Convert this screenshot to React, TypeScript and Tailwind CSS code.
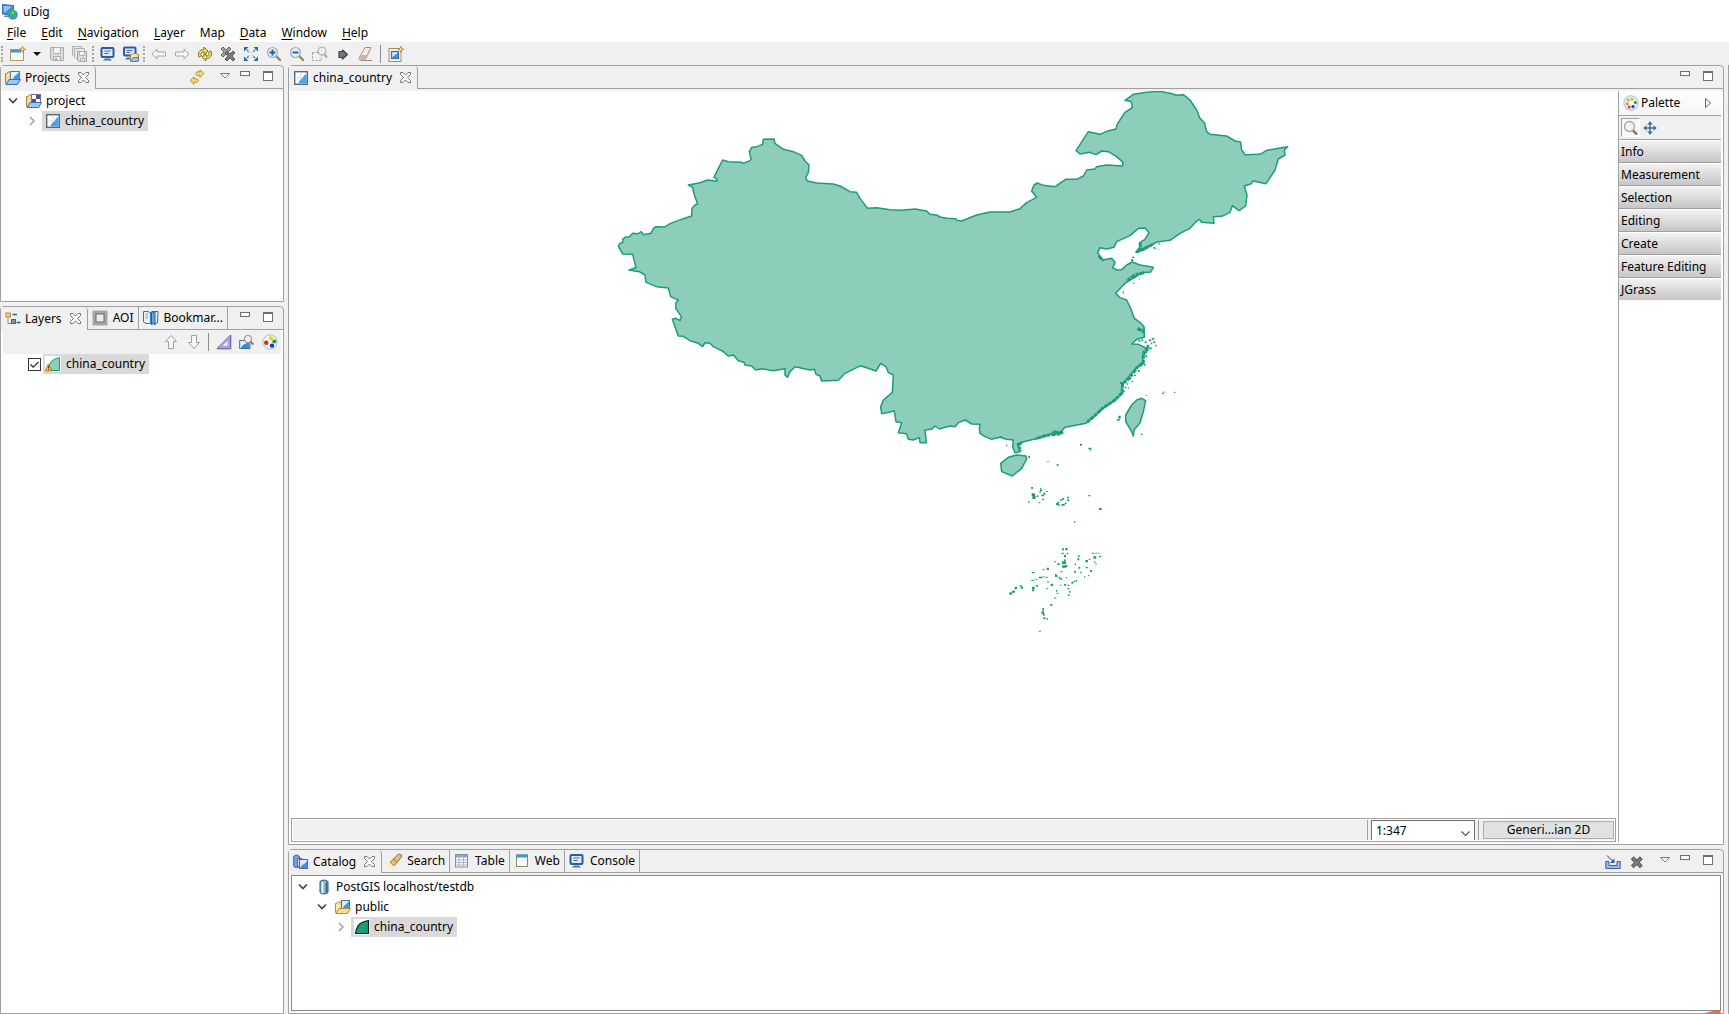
import type { ReactNode } from "react";

/* ---------- icons (16 x 16 grid) ---------- */

function Svg({ children, size = 16 }: { children: ReactNode; size?: number }) {
  return (
    <svg width={size} height={size} viewBox={`0 0 ${size} ${size}`} className="shrink-0" aria-hidden="true">
      {children}
    </svg>
  );
}

const AppIcon = () => (
  <Svg>
    <path d="M0 0.5L11.5 1.5V9L8 11L0.5 10Z" fill="#3d8fd8" stroke="#2a6db5" />
    <path d="M1.5 2L10 2.5L2 9Z" fill="#8cc9f5" />
    <path d="M3 11.5H7L8 13H2Z" fill="#5c87ad" />
    <circle cx="10.7" cy="10.7" r="5" fill="#3b8ad0" />
    <path d="M8 7.5L11 6L14 8L13 10L14.5 12L12 15L10.5 12L7.5 11L6.5 9Z" fill="#3dc04b" />
    <path d="M10 8.5L12 8L11 10ZM8 12.5L9 14L7.5 13.5Z" fill="#b7ecf5" />
  </Svg>
);
const Sparkle = ({ x = 0, y = 0 }: { x?: number; y?: number }) => (
  <path transform={`translate(${x} ${y})`} d="M3 0L3.8 2.2L6 3L3.8 3.8L3 6L2.2 3.8L0 3L2.2 2.2Z" fill="#ffe99a" stroke="#b8862a" strokeWidth=".9" />
);
const NewIcon = () => (
  <Svg>
    <rect x="0.5" y="3.5" width="13" height="11" fill="#eef6fc" stroke="#b39a62" />
    <path d="M1 4H11V6.5H1Z" fill="#4e93cf" />
    <path d="M3 14L13 7V14Z" fill="#fff" />
    <Sparkle x={9.5} y={0.3} />
  </Svg>
);
const SaveIcon = () => (
  <Svg>
    <path d="M1.5 1.5H14.5V14.5H3L1.5 13Z" fill="#dcdcdc" stroke="#aaa" />
    <path d="M4.500 1.500H11.500V7.500H4.500Z" fill="#f4f4f4" stroke="#b0b0b0" />
    <path d="M4.500 10.500H11.500V14.500H4.500Z" fill="#eee" stroke="#aaa" />
    <path d="M6 12H8V14H6Z" fill="#aaa" />
  </Svg>
);
const SaveAllIcon = () => (
  <Svg>
    <path d="M0.500 0.500H9.500V10.500H2L0.500 9Z" fill="#e8e8e8" stroke="#b0b0b0" />
    <path d="M2.500 2.500H12.500V12.500H4L2.500 11Z" fill="#e8e8e8" stroke="#b0b0b0" />
    <path d="M5.500 5.500H14.500V15.500H7L5.500 14Z" fill="#dcdcdc" stroke="#a4a4a4" />
    <path d="M7.500 5.500H12.500V9.500H7.500ZM8.500 12.500H12.500V15H8.500Z" fill="#f4f4f4" stroke="#b0b0b0" />
  </Svg>
);
const MonitorIcon = () => (
  <Svg>
    <rect x="1.500" y="2" width="12" height="9" rx="1" fill="#dfeaf8" stroke="#2f5b96" strokeWidth="2" />
    <path d="M4.500 5H10.500M4.500 7.500H8.500" stroke="#42699e" />
    <path d="M5 12.500H10L12 14.500H3Z" fill="#4a73ab" />
  </Svg>
);
const MonitorFolderIcon = () => (
  <Svg>
    <rect x="1" y="1.500" width="11.500" height="8" rx="1" fill="#dfeaf8" stroke="#2f5b96" strokeWidth="2" />
    <path d="M3.500 4.500H9.500M3.500 6.500H7" stroke="#42699e" />
    <path d="M4 11.500H8L8 13.500H2Z" fill="#4a73ab" />
    <path d="M7.500 15V9L9 8.500L10 7.500H13L14 8.500H15.500V15Z" fill="#fbe3a2" stroke="#b88a38" />
    <path d="M7.500 15.500L10 11.500H16L14.500 15.500Z" fill="#9cc4f0" stroke="#3a6cb8" strokeWidth=".8" />
  </Svg>
);
const ArrowL = () => (
  <Svg><path d="M1 8L6 3V6H14.500V10H6V13Z" fill="#f7f7f7" stroke="#a8a8a8" /></Svg>
);
const ArrowR = () => (
  <Svg><path d="M15 8L10 3V6H1.500V10H10V13Z" fill="#f7f7f7" stroke="#a8a8a8" /></Svg>
);
const ArrowU = () => (
  <Svg><path d="M8 1.500L13.500 7.500H10.500V14.500H5.500V7.500H2.500Z" fill="#f7f7f7" stroke="#a0a0a0" /></Svg>
);
const ArrowD = () => (
  <Svg><path d="M8 14.500L13.500 8.500H10.500V1.500H5.500V8.500H2.500Z" fill="#f7f7f7" stroke="#a0a0a0" /></Svg>
);
const RefreshIcon = () => (
  <Svg>
    <path d="M2 11C0 7 3 3 7 3.500V1L11 5L7 8.500V6C4 5.500 3.500 8 4.500 10Z" fill="#f6e04a" stroke="#6f6528" strokeWidth=".9" />
    <path d="M14 5C16 9 13 13 9 12.500V15L5 11L9 7.500V10C12 10.500 12.500 8 11.500 6Z" fill="#f6e04a" stroke="#6f6528" strokeWidth=".9" />
  </Svg>
);
const CROSS = "M1 3L3 1L6 4L9 1L11 3L8 6L11 9L9 11L6 8L3 11L1 9L4 6Z";
const StopIcon = () => (
  <Svg>
    <path d={CROSS} fill="#a2a2a2" stroke="#666" />
    <path d={CROSS} transform="translate(4 4)" fill="#7d7d7d" stroke="#5a5a5a" />
  </Svg>
);
const ExtentIcon = () => (
  <Svg>
    <path d="M2 2L6.500 6.500M14 2L9.500 6.500M2 14L6.500 9.500M14 14L9.500 9.500" stroke="#2c6a9c" strokeDasharray="2 1" strokeWidth="1.400" />
    <path d="M1 1H5.500L1 5.500ZM15 1H10.500L15 5.500ZM1 15H5.500L1 10.500ZM15 15H10.500L15 10.500Z" fill="#2a6b9f" />
  </Svg>
);
const Lens = ({ plus }: { plus: boolean }) => (
  <Svg>
    <path d="M9.500 9.500L14 14" stroke="#a6815a" strokeWidth="2.400" strokeLinecap="round" />
    <circle cx="6.500" cy="6.500" r="5" fill="#e6f1fb" stroke="#a3adba" strokeWidth="1.200" />
    <path d={plus ? "M3.500 6.500H9.500M6.500 3.500V9.500" : "M3.500 6.500H9.500"} stroke="#2b5f9e" strokeWidth="2" />
  </Svg>
);
const ZoomBoxIcon = () => (
  <Svg>
    <rect x="0.500" y="6.500" width="9" height="8" fill="none" stroke="#9a9a9a" strokeDasharray="2 1.500" />
    <circle cx="10" cy="5" r="4" fill="#ededed" stroke="#b0b0b0" />
    <path d="M12 8L15 11.500" stroke="#b0a8a0" strokeWidth="2" />
  </Svg>
);
const GoIcon = () => (
  <Svg><path d="M4 5.500H7.500V4L12.500 8.500L7.500 13V11.500H4Z" fill="#6e7480" stroke="#3f444d" strokeWidth="1.200" strokeLinejoin="round" /></Svg>
);
const EraserIcon = () => (
  <Svg>
    <path d="M3 14.500H14" stroke="#9a8a7a" />
    <path d="M1 12L7 1.500H13L8 12L6.500 14H1.500Z" fill="#f6e9dd" stroke="#a8917c" />
    <path d="M1 12H8L13 1.500" stroke="#bfa48c" fill="none" strokeWidth=".8" />
    <path d="M1 12L3 9H9.500L8 12L6.500 14H1.500Z" fill="#cdb8a8" />
  </Svg>
);
const MapGlyph = () => (
  <Svg>
    <rect x="1.700" y="1.700" width="12.600" height="12.600" fill="#fff" stroke="#5e6670" strokeWidth="1.400" />
    <path d="M8 2.500V14M2.500 8H13.500" stroke="#d3dde6" />
    <path d="M5.500 13.600C6 9.500 9 9.500 10 7.500C11 5 12 4.500 13.600 4V13.600Z" fill="#4aa3ee" />
  </Svg>
);
const NewMapIcon = () => (
  <Svg>
    <rect x="1" y="2.500" width="12" height="13" fill="#fff" stroke="#a08a58" />
    <rect x="3.500" y="5.500" width="7" height="7" fill="#d5e9fa" stroke="#3f6ea6" strokeWidth="1.300" />
    <path d="M4 12C6 8 8 10 10 6V12Z" fill="#3f8fdd" />
    <Sparkle x={9.800} y={0.300} />
  </Svg>
);
const ProjectFolder = ({ dark = false }: { dark?: boolean }) => (
  <Svg>
    <path d="M0.500 13.500V3.500H2L3 2H5.500V5H13V13.500Z" fill="#f6dc94" stroke="#a9843c" />
    <rect x="5.500" y="1.500" width="9" height="8" fill={dark ? "#fff" : "#e8f4fd"} stroke="#7c6a9c" />
    <path d={dark ? "M10 2H14V6H10ZM6 6H10V9H6Z" : "M8 9C9 5 11 6 14 2V9Z"} fill={dark ? "#5a4a8c" : "#3f9be8"} />
    <path d="M1 14.500L4 9.500H15.500L12.500 14.500Z" fill="#9cc6f2" stroke="#3d6fb5" />
  </Svg>
);
const SchemaFolder = () => (
  <Svg>
    <path d="M0.500 13.500V4.500H2L3 3H6V6H13V13.500Z" fill="#fbe7b4" stroke="#c08a34" />
    <rect x="6.500" y="1.500" width="8" height="8" fill="#d9ecfb" stroke="#51789f" />
    <path d="M8 9C9 6 11 6 14 2V9Z" fill="#3f9be8" />
    <path d="M1 14.500L4 9.500H15.500L12.500 14.500Z" fill="#fbdc94" stroke="#c08a34" />
  </Svg>
);
const LinkIcon = () => (
  <Svg>
    <path d="M15 4.500L11 0.800V2.800H8L6.500 5L8 6.500H11V8.500Z" fill="#f9d873" stroke="#b5862b" strokeWidth=".9" />
    <path d="M1 11.500L5 7.800V9.800H8L9.500 11.500L8 13.300H5V15.300Z" fill="#f9d873" stroke="#b5862b" strokeWidth=".9" />
  </Svg>
);
const LayersIcon = () => (
  <Svg>
    <path d="M3 5V12.500H6" stroke="#8a8a8a" fill="none" />
    <rect x="1" y="2" width="4.500" height="4" fill="#f7cf87" stroke="#c48a33" />
    <path d="M7.500 3.500H12M11.500 11.500H15.500" stroke="#2f5f9c" strokeWidth="1.600" />
    <rect x="6.500" y="8.500" width="4" height="4" fill="#8c8ca8" stroke="#5a5a78" />
  </Svg>
);
const AoiIcon = () => (
  <Svg>
    <rect x="0.500" y="0.500" width="15" height="15" fill="#a5a5a5" />
    <rect x="4" y="4" width="8" height="8" fill="#ececec" stroke="#6a6a6a" />
  </Svg>
);
const BookIcon = () => (
  <Svg>
    <path d="M0.500 1.500H5L7.500 3V13.500H3L0.500 12Z" fill="#e9f3fc" stroke="#3b6ea8" />
    <path d="M2.500 4H5M2.500 6H5M2.500 8H5" stroke="#8aa6c4" />
    <path d="M7.500 3L9 1.500H15L14.500 13H8Z" fill="#e9f3fc" stroke="#3b6ea8" />
    <path d="M8.500 2H12V15L10.300 13L8.500 15Z" fill="#56a9ea" stroke="#245f9c" />
  </Svg>
);
const SetSquareIcon = () => (
  <Svg>
    <path d="M1 14.500L14.500 1V14.500Z" fill="#a9a4dc" stroke="#7670b0" />
    <path d="M6.500 11.800L11.500 7V11.800Z" fill="#f4f4fb" />
    <path d="M15.500 1V15.500H1" stroke="#c4c2da" fill="none" />
  </Svg>
);
const LayerZoomIcon = () => (
  <Svg>
    <path d="M0.700 14.500V6.500H8L11 9V14.500Z" fill="#e8f3fd" stroke="#3c6a9c" />
    <path d="M2 14C4 9 6 11 9 8L10.500 9V14Z" fill="#2e8ae2" />
    <circle cx="9" cy="5" r="3.500" fill="#f3f3f3" stroke="#a09a8e" strokeWidth="1.200" />
    <path d="M11.500 7.500L14.500 10.500" stroke="#93805f" strokeWidth="2" />
  </Svg>
);
const PaletteIcon = ({ soft = false }: { soft?: boolean }) => (
  <Svg>
    <circle cx="8" cy="8" r="7.200" fill={soft ? "#e3eef8" : "#eaf6fc"} stroke="#9cc0dd" />
    <circle cx="5" cy="4.800" r={soft ? 1.500 : 2} fill={soft ? "#f3a81c" : "#fff"} />
    <circle cx="9" cy="4.200" r={soft ? 1.500 : 2.200} fill={soft ? "#f0b21c" : "#e9dc10"} />
    <circle cx="12.300" cy="7.600" r={soft ? 1.500 : 2} fill="#24a02c" />
    <circle cx="10" cy="11.600" r={soft ? 1.500 : 2.200} fill="#1632d0" />
    <circle cx="4.200" cy="8.800" r={soft ? 1.500 : 2.200} fill={soft ? "#f0901c" : "#e02412"} />
    {soft && <circle cx="6.200" cy="12" r="1.500" fill="#d2405a" />}
    {soft && <circle cx="8" cy="8" r="1.800" fill="#fff" />}
  </Svg>
);
const LayerShape = () => (
  <Svg>
    <rect width="16" height="16" fill="#fff" />
    <path d="M3 15C3.500 6 8 3 14.500 1.500V14.500H4" fill="#8dceba" stroke="#1b9e77" />
    <path d="M3.500 8L7 15H0Z" fill="#f5c25c" stroke="#b07818" />
    <path d="M3.500 10V12.500M3.500 13.200V14.200" stroke="#5a3a08" />
  </Svg>
);
const FeatureShape = () => (
  <Svg>
    <rect width="16" height="16" fill="#fff" />
    <path d="M1.500 14.500C3 5 7 3 14.500 1.500V14.500Z" fill="#1b9e77" stroke="#06241b" strokeWidth="1.200" />
  </Svg>
);
const CatalogIcon = () => (
  <Svg>
    <path d="M0.700 3C0.700 0.500 6.500 0.500 6.500 3V12C6.500 14 0.700 14 0.700 12Z" fill="#6aa6dd" stroke="#2d5f9e" />
    <path d="M4.500 4.500H9V12.500H4.500Z" fill="#e0dcf2" stroke="#6a5aa6" />
    <rect x="6.500" y="5.500" width="8" height="9" fill="#d9ecfb" stroke="#6a5aa6" />
    <path d="M7.500 14C9 9 12 11 14 7V14Z" fill="#3f8fe0" />
  </Svg>
);
const SearchIcon = () => (
  <Svg>
    <path d="M0.500 11L5 9L7 12L2 15.500Z" fill="#fdf0b8" />
    <path d="M4 9L8 13L11 9.500L7.500 6Z" fill="#f0c05c" stroke="#b58428" />
    <path d="M7.500 6L12.500 1L15.500 2V4L11 9.500Z" fill="#e5bd85" stroke="#8d6c55" />
  </Svg>
);
const TableIcon = () => (
  <Svg>
    <rect x="1.500" y="1.500" width="12" height="12.500" fill="#fff" stroke="#7e8fa8" />
    <path d="M2 2H13V4.500H2Z" fill="#88a5c8" />
    <path d="M2 7H13M2 9.500H13M2 12H13M5 2V14M9.500 2V14" stroke="#a8b5c8" />
  </Svg>
);
const WebIcon = () => (
  <Svg>
    <rect x="2.500" y="2" width="11" height="11.500" fill="#f4fafe" stroke="#8f8a62" />
    <path d="M2 1.500H14V4.500H2Z" fill="#4a93ce" />
  </Svg>
);
const DbIcon = () => (
  <Svg>
    <path d="M4 3C4 0.500 12 0.500 12 3V13C12 15.500 4 15.500 4 13Z" fill="#7eb3cf" stroke="#24506c" />
    <path d="M6.500 3V14" stroke="#e4f4fb" strokeWidth="2" />
    <path d="M10.500 3.500V13.500" stroke="#2d6382" strokeWidth="1.400" />
  </Svg>
);
const ImportIcon = () => (
  <Svg>
    <path d="M0.800 7.500H4V11.500H12V7.500H15.200V14.500H0.800Z" fill="#9cbbe4" stroke="#3a5f9e" />
    <path d="M2 1.500L8 7.500" stroke="#2a3a9c" />
    <path d="M9.500 4.500V9H5Z" fill="#1f5fa8" />
  </Svg>
);
const DeleteIcon = () => (
  <Svg>
    <path d={CROSS} transform="translate(1.500 2) scale(1.050)" fill="#7d7d7d" stroke="#5b5b5b" />
  </Svg>
);
const ToolLens = () => (
  <Svg>
    <path d="M9.500 10L14 14.500" stroke="#8a6a5a" strokeWidth="2.400" />
    <circle cx="6.500" cy="6.500" r="5" fill="#f2f2f2" stroke="#a8a8a8" strokeWidth="1.300" />
  </Svg>
);
const PanIcon = () => (
  <Svg>
    <path d="M8 3V13M3 8H13" stroke="#3a6ea5" strokeWidth="1.500" />
    <path d="M8 1.200L10.800 4.500H5.200ZM8 14.800L10.800 11.500H5.200ZM1.200 8L4.500 5.200V10.800ZM14.800 8L11.500 5.200V10.800Z" fill="#3a6ea5" />
  </Svg>
);
const CloseIcon = () => (
  <Svg size={11}>
    <path d="M0.500 0.500H3L5.500 3L8 0.500H10.500V2.500L7.500 5.500L10.500 8.500V10.500H8L5.500 8L3 10.500H0.500V8.500L3.500 5.500L0.500 2.500Z" fill="#fafafa" stroke="#6a6a6a" strokeWidth=".9" />
  </Svg>
);

/* ---------- small building blocks ---------- */

function IconButton({ label, className = "w-[23px]", children }: { label: string; className?: string; children: ReactNode }) {
  return (
    <button type="button" aria-label={label} className={`flex h-6 items-center justify-center ${className}`}>
      {children}
    </button>
  );
}

const Grip = () => <span className="mr-0.5 ml-px h-4 w-0 border-l-2 border-dotted border-[#b0a890]" />;

const ViewMenu = () => (
  <button type="button" aria-label="View menu" className="h-2.5 w-2.5">
    <svg width="10" height="6" viewBox="0 0 10 6"><path d="M0.500 0.500H9.500L5 5Z" fill="#fff" stroke="#777" /></svg>
  </button>
);

function WindowButtons({ menu = false }: { menu?: boolean }) {
  return (
    <div className="flex items-start pt-[5px] pr-[10px]">
      {menu && <ViewMenu />}
      <button type="button" aria-label="Minimize" className="ml-2.5 h-[5px] w-2.5 border border-[#6e6e6e] bg-white" />
      <button type="button" aria-label="Maximize" className="ml-[13px] h-2.5 w-2.5 border border-t-2 border-[#6e6e6e] bg-white" />
    </div>
  );
}

function Tab({ icon, label, active = false }: { icon: ReactNode; label: string; active?: boolean }) {
  return (
    <div
      role="tab"
      aria-selected={active}
      className={`flex items-center border-r border-[#a0a0a0] pl-1 ${active ? "-mb-px h-[23px] gap-1 rounded-tr bg-[#f0f0f0] pr-1.5" : "h-[22px] gap-[5px] pr-1"}`}
    >
      {icon}
      <button type="button" className="whitespace-nowrap">{label}</button>
      {active && (
        <button type="button" aria-label={`Close ${label}`} className="ml-1">
          <CloseIcon />
        </button>
      )}
    </div>
  );
}

function Panel({ tabs, tools, children, className = "" }: { tabs: ReactNode; tools: ReactNode; children: ReactNode; className?: string }) {
  return (
    <section className={`flex min-h-0 flex-col rounded-t-[4px] border border-[#a0a0a0] bg-[#f0f0f0] ${className}`}>
      <header className="flex h-[23px] shrink-0 justify-between border-b border-[#a0a0a0]">
        <div className="flex" role="tablist">{tabs}</div>
        <div className="flex items-start">{tools}</div>
      </header>
      {children}
    </section>
  );
}

const Chevron = ({ open = false }: { open?: boolean }) => (
  <svg width="10" height="10" viewBox="0 0 10 10" className="shrink-0" aria-hidden="true">
    {open ? (
      <path d="M1 2.500L5 6.500L9 2.500" fill="none" stroke="#404040" strokeWidth="1.600" />
    ) : (
      <path d="M3 1L7 5L3 9" fill="none" stroke="#a6a6a6" strokeWidth="1.600" />
    )}
  </svg>
);

function TreeRow({ icon, label, open = false, selected = false, className = "" }: { icon: ReactNode; label: string; open?: boolean; selected?: boolean; className?: string }) {
  return (
    <li className={`flex h-5 items-center ${className}`}>
      <button type="button" aria-label={open ? "Collapse" : "Expand"}><Chevron open={open} /></button>
      <span className={`ml-[5px] flex h-5 items-center gap-1 pr-1 pl-[3px] ${selected ? "bg-[#d9d9d9]" : ""}`}>
        {icon}
        {label}
      </span>
    </li>
  );
}

/* ---------- map ---------- */

type Section = { dx: number; dy: number; pts: string };

/* Border of the country, clockwise from its western tip; each section has its own origin. */
const border: Section[] = [
  { dx: 1800, dy: 240, pts: "55,497 60,490 68,488 68,478 75,472 88,470 98,460 115,461 124,455 130,464 153,460 160,446 168,440 195,441 210,431 250,416 275,408 276,385 285,375 293,372 283,345 278,322 265,315 300,308 323,300 350,304 352,298 342,292 355,265 368,240 385,245 425,247 430,250 448,243 453,238 448,215 455,202 470,200 488,193 490,178 522,177 525,190 550,208 580,215 605,226 615,243 627,255 625,278 617,292 622,303 650,309 700,312 720,318 750,335 770,337 780,355 803,385 830,383 870,389 905,391 945,387 980,393 990,403 1010,405" },
  { dx: 2820, dy: 240, pts: "0,411 20,415 48,416 50,421 65,423 110,405 150,396 210,396 240,386 260,368 290,352 275,333 282,315 292,309 310,316 345,320 377,298 410,298 430,288 440,270 465,267 470,260 500,255 548,258 549,247 530,230 505,215 485,213 468,224 450,217 420,222 408,212 445,155 480,163 505,152 528,147 532,132 555,97 577,83 574,65 555,61 580,43 620,37 660,34 690,40 710,46 730,44 750,60 770,90 780,115 793,128 800,155 810,163 860,168 885,183 902,186 905,210 915,224 960,223 980,211 1043,200 1033,210 1035,225 1015,237 1005,270 978,311 940,303 932,312 913,318 921,345 917,378 897,392 877,377 870,397 845,409 820,410 822,430 785,427 778,418 768,425 750,445 720,460 690,481 650,486 610,510 590,516 600,500 600,487 615,478 627,458 615,444 595,445 570,467 530,485 522,502 500,507 480,503 473,518 488,540 515,535 525,547 518,563 530,570 545,569 560,555 577,546 600,555 640,562 632,576 605,578 585,592" },
  { dx: 2940, dy: 750, pts: "455,87 435,100 407,130 420,143 440,150 452,175 463,205 480,217 492,230 493,262 470,268 455,282 475,283 495,292 500,305 487,320 490,340 470,352 455,370 425,405 428,430 405,450 370,475 350,492 318,520 255,532 240,548 225,545 205,555 165,567 125,577 112,582 120,605 105,608 98,590 100,570 80,568 60,562 35,568 15,560" },
  { dx: 2700, dy: 1200, pts: "240,100 238,85 240,73 215,72 195,60 175,68 165,80 150,78 130,83 118,87 105,78 95,88 75,90 79,128 60,128 58,113 40,120 25,118" },
  { dx: 1800, dy: 240, pts: "920,1061 895,1058 905,1028 888,1025 883,993 845,1001 842,980 850,960 877,937 880,885 865,878 858,860 842,850 828,873 782,857 735,880 715,901 665,903 660,888 648,883 643,868 630,870 585,860 570,875 562,892 555,885 555,866 520,872 485,866 467,870 455,858 435,855 432,847 415,842 400,825 385,828 370,815 340,800 330,790 315,788 308,800 295,790 270,782 250,769 235,768 225,740 217,718 228,715 240,722 244,710 227,685 228,668 235,660 212,650 205,624 170,620 138,607 135,585 118,575 87,570 108,563 98,523 68,522 60,508" },
];
const taiwan: Section[] = [{ dx: 2940, dy: 750, pts: "485,445 497,452 490,485 480,518 462,540 460,558 455,545 437,515 437,495 455,465 470,450" }];
const hainan: Section[] = [{ dx: 2940, dy: 750, pts: "85,622 110,615 138,618 140,627 125,655 97,678 65,665 62,640" }];

/* Stretches of coast so dense with islets that they read as a heavier line. */
const rugged: Section[] = [
  { dx: 2940, dy: 750, pts: "472,235 490,245 490,236" },
  { dx: 2940, dy: 750, pts: "505,290 490,308 490,338 472,352 450,382 428,402 426,428 405,450 368,474 350,492 322,516" },
  { dx: 2940, dy: 750, pts: "250,548 222,546 238,552 200,556 168,566" },
  { dx: 2940, dy: 750, pts: "492,68 466,74 440,92" },
  { dx: 2820, dy: 240, pts: "600,487 602,505 592,515 612,506 640,492" },
  { dx: 2820, dy: 240, pts: "476,528 490,542" },
  { dx: 2940, dy: 750, pts: "125,577 116,585 121,604" },
];

const place = (sections: Section[]) =>
  sections
    .flatMap((s) => s.pts.split(" ").map((p) => {
      const [x, y] = p.split(",").map(Number);
      return `${x + s.dx},${y + s.dy}`;
    }))
    .join(" ");

/* Islets as "x,y,width,height". */
const islets: Section[] = [
  { dx: 2820, dy: 240, pts: "573,538,5,6 578,530,5,4 640,500,5,6 655,488,4,6 645,505,4,3 655,506,3,3 586,512,8,6 597,596,3,3" },
  { dx: 2940, dy: 750, pts: "457,20,5,5 455,28,5,5 460,98,4,4 428,124,4,6 475,270,6,5 484,268,5,5 494,274,6,6 507,268,6,6 515,264,8,5 520,274,6,5 512,278,5,5 525,284,5,5 500,284,8,6 508,292,7,6 498,298,8,6 496,316,6,6 492,342,5,5 474,360,5,6 462,374,6,4 448,384,5,5 455,392,5,4 440,400,5,4 434,410,6,5 443,412,4,4 430,422,5,4 420,396,6,6 546,428,6,4 551,424,3,4 582,425,4,4 497,435,4,3 415,497,7,9 410,508,10,4 483,551,5,4 300,581,6,6 325,593,9,5 329,598,5,4 145,617,5,7 202,633,4,3 230,642,6,5 153,711,6,4 180,714,3,4 78,584,4,4 60,558,5,5" },
  { dx: 2940, dy: 1410, pts: "153,51,6,5 144,94,5,4 155,70,10,8 157,78,10,9 170,76,5,5 180,58,6,5 178,64,5,4 190,68,6,6 184,74,8,5 186,86,6,5 198,62,5,4 177,96,4,4 228,99,8,6 232,95,5,4 234,103,5,5 240,88,6,4 246,84,6,5 244,102,10,5 254,98,6,5 261,80,6,5 262,88,6,5 325,75,6,4 357,114,8,6 282,153,4,5 246,235,6,6 256,234,7,7 245,248,6,5 252,254,6,8 260,248,5,5 246,274,12,8 252,268,5,6 246,286,12,7 256,284,6,8 232,280,7,5 222,273,5,4 241,303,6,4 200,293,7,7 188,297,5,4 155,306,9,4 160,328,4,4 154,330,5,3 168,326,4,4 176,320,12,5 190,318,4,4 198,320,5,4 225,312,5,9 236,320,5,6 240,325,7,4 257,321,4,4 228,316,5,4 202,333,4,5 212,341,7,7 168,345,6,5 156,350,8,7 156,358,7,6 198,354,5,4 252,342,6,5 262,344,6,4 240,344,4,4 274,336,6,5 280,332,6,5 287,330,4,5 262,354,6,4 267,363,5,5 264,373,5,5 228,360,4,5 230,368,5,4 222,382,5,4 211,402,6,6 104,350,7,8 119,345,6,5 122,350,7,6 96,362,9,6 88,367,8,7 187,414,5,8 184,424,8,7 188,430,6,7 190,442,7,6 200,444,4,5 176,482,7,3 294,256,5,5 292,265,6,6 284,280,4,5 282,303,6,5 295,291,6,5 300,305,5,4 316,270,8,7 326,266,5,4 317,290,6,5 330,300,6,6 312,318,4,4 324,315,4,4 335,248,8,3 346,248,5,3 354,248,5,3 340,259,9,7 357,257,6,5 342,274,4,4 346,280,4,4" },
];

function MapCanvas() {
  return (
    <svg viewBox="867 273 3987 2178" preserveAspectRatio="xMidYMin meet" className="min-h-0 w-full flex-1 bg-white" role="img" aria-label="china_country">
      <g fill="#8dceba" stroke="#1b9e77" strokeWidth="4.5" strokeLinejoin="round">
        <polygon points={place(border)} />
        <polygon points={place(taiwan)} />
        <polygon points={place(hainan)} />
        {rugged.map((s, i) => (
          <polyline key={i} points={place([s])} fill="none" strokeWidth="9" strokeDasharray="14 3 9 2" />
        ))}
      </g>
      <g fill="#1b9e77">
        {islets.flatMap((s) =>
          s.pts.split(" ").map((p) => {
            const [x, y, w, h] = p.split(",").map(Number);
            return <rect key={`${s.dy}-${p}`} x={x + s.dx} y={y + s.dy} width={w} height={h} rx="1" />;
          }),
        )}
      </g>
    </svg>
  );
}

/* ---------- page ---------- */

const menus = [
  ["F", "ile"], ["E", "dit"], ["N", "avigation"], ["L", "ayer"], ["", "Map"], ["D", "ata"], ["W", "indow"], ["H", "elp"],
];
const drawers = ["Info", "Measurement", "Selection", "Editing", "Create", "Feature Editing", "JGrass"];

export default function App() {
  return (
    <div className="relative flex h-screen flex-col overflow-hidden bg-[#f0f0f0] font-['Noto_Sans','Open_Sans',sans-serif] text-xs leading-5 text-black">
      <div className="flex h-6 shrink-0 items-center gap-[5px] bg-white pl-0.5">
        <AppIcon />
        <h1>uDig</h1>
      </div>
      <nav className="flex h-[18px] shrink-0 items-center gap-px bg-white leading-[18px]">
        {menus.map(([key, rest]) => (
          <button type="button" key={rest} className="px-[7px]">
            <span className="underline underline-offset-2">{key}</span>
            {rest}
          </button>
        ))}
      </nav>

      <div className="flex h-[23px] shrink-0 items-center pl-px" role="toolbar">
        <span className="h-4 w-0 border-l-2 border-dotted border-[#b0a890]" />
        <IconButton label="New" className="ml-[3px] w-[23px]"><NewIcon /></IconButton>
        <IconButton label="New menu" className="w-4">
          <svg width="8" height="4" viewBox="0 0 8 4"><path d="M0 0H8L4 4Z" fill="#111" /></svg>
        </IconButton>
        <IconButton label="Save"><SaveIcon /></IconButton>
        <IconButton label="Save all"><SaveAllIcon /></IconButton>
        <Grip />
        <IconButton label="Console"><MonitorIcon /></IconButton>
        <IconButton label="Open console"><MonitorFolderIcon /></IconButton>
        <Grip />
        <IconButton label="Back"><ArrowL /></IconButton>
        <IconButton label="Forward"><ArrowR /></IconButton>
        <IconButton label="Refresh"><RefreshIcon /></IconButton>
        <IconButton label="Stop"><StopIcon /></IconButton>
        <IconButton label="Show all"><ExtentIcon /></IconButton>
        <IconButton label="Zoom in"><Lens plus /></IconButton>
        <IconButton label="Zoom out"><Lens plus={false} /></IconButton>
        <IconButton label="Zoom to selection"><ZoomBoxIcon /></IconButton>
        <IconButton label="Commit"><GoIcon /></IconButton>
        <IconButton label="Clear"><EraserIcon /></IconButton>
        <span className="mx-[3px] h-[18px] w-px bg-[#8c8c8c]" />
        <IconButton label="New map" className="w-6"><NewMapIcon /></IconButton>
      </div>

      <main className="flex min-h-0 flex-1 gap-1">
        <aside className="flex w-[284px] shrink-0 flex-col gap-1">
          <Panel
            className="flex-1"
            tabs={<Tab active icon={<ProjectFolder />} label="Projects" />}
            tools={
              <>
                <button type="button" aria-label="Link with editor" className="mt-[3px] mr-[15px]"><LinkIcon /></button>
                <WindowButtons menu />
              </>
            }
          >
            <ul className="mt-0.5 flex-1 bg-white">
              <TreeRow open icon={<ProjectFolder dark />} label="project" className="pl-[7px]" />
              <TreeRow selected icon={<MapGlyph />} label="china_country" className="pl-[26px]" />
            </ul>
          </Panel>
          <Panel
            className="flex-3"
            tabs={
              <>
                <Tab active icon={<LayersIcon />} label="Layers" />
                <Tab icon={<AoiIcon />} label="AOI" />
                <Tab icon={<BookIcon />} label="Bookmar..." />
              </>
            }
            tools={<WindowButtons />}
          >
            <div className="flex min-h-0 flex-1 flex-col bg-white">
              <div className="mx-0.5 flex h-6 shrink-0 items-center justify-end bg-[#f0f0f0]">
                <IconButton label="Move up"><ArrowU /></IconButton>
                <IconButton label="Move down"><ArrowD /></IconButton>
                <span className="mx-[3px] h-[18px] w-px bg-[#8c8c8c]" />
                <IconButton label="Snap"><SetSquareIcon /></IconButton>
                <IconButton label="Zoom to layer"><LayerZoomIcon /></IconButton>
                <IconButton label="Style"><PaletteIcon /></IconButton>
              </div>
              <label className="flex h-5 items-center pl-[27px]">
                <input
                  type="checkbox"
                  defaultChecked
                  className="peer h-[13px] w-[13px] appearance-none border border-[#333] bg-white"
                />
                <svg width="13" height="13" viewBox="0 0 13 13" className="pointer-events-none -ml-[13px] hidden peer-checked:block" aria-hidden="true">
                  <path d="M2.500 6.500L5.200 9.200L10.500 3.800" fill="none" stroke="#222" strokeWidth="1.200" />
                </svg>
                <span className="ml-0.5 flex h-5 items-center gap-[5px] bg-[#d9d9d9] pr-1 pl-0.5">
                  <LayerShape />
                  china_country
                </span>
              </label>
            </div>
          </Panel>
        </aside>

        <div className="flex min-w-0 flex-1 flex-col gap-1">
          <Panel
            className="flex-1"
            tabs={<Tab active icon={<MapGlyph />} label="china_country" />}
            tools={<WindowButtons />}
          >
            <div className="mt-0.5 flex min-h-0 flex-1 bg-white pr-0.5 pb-0.5">
              <div className="flex min-w-0 flex-1 flex-col">
                <MapCanvas />
                <div className="mr-0.5 ml-0.5 flex h-6 shrink-0 border border-[#a0a0a0] p-px">
                  <div className="flex-1 border-r border-[#a0a0a0] bg-[#f0f0f0]" />
                  <div className="flex bg-[#f0f0f0] pl-[3px]">
                    <label className="relative flex w-[104px] border border-b-0 border-[#707070] bg-white">
                      <span className="absolute h-0 w-0 opacity-0" aria-hidden="true" />
                      <select aria-label="Scale" className="h-[19px] w-full appearance-none pl-1 leading-[19px]" defaultValue="1:347">
                        <option>1:347</option>
                      </select>
                      <svg width="9" height="6" viewBox="0 0 9 6" className="pointer-events-none absolute right-1 bottom-[3px]" aria-hidden="true">
                        <path d="M0.500 0.500L4.500 4.500L8.500 0.500" fill="none" stroke="#555" strokeWidth="1.200" />
                      </svg>
                    </label>
                    <span className="mr-1 ml-[3px] w-px bg-[#a0a0a0]" />
                    <button type="button" className="my-px w-[131px] border border-[#adadad] bg-[#e1e1e1] leading-4">
                      Generi...ian 2D
                    </button>
                  </div>
                </div>
              </div>
              <div className="w-[103px] shrink-0 border-l border-[#a0a0a0]">
                <div className="flex h-[25px] items-center border-b border-[#a0a0a0] bg-linear-to-b from-white to-[#f5f5f5] pl-1">
                  <PaletteIcon soft />
                  <span className="ml-0.5 flex-1">Palette</span>
                  <button type="button" aria-label="Collapse palette" className="mr-2.5">
                    <svg width="6" height="10" viewBox="0 0 6 10"><path d="M0.500 0.500L5.500 5L0.500 9.500Z" fill="#fff" stroke="#666" /></svg>
                  </button>
                </div>
                <div className="flex h-[23px] items-center bg-[#f0f0f0] pl-0.5">
                  <button type="button" aria-label="Zoom" className="flex h-[19px] w-[19px] items-center justify-center border border-[#fff] border-t-[#a0a0a0] border-l-[#a0a0a0] bg-[#f7f7f7]">
                    <ToolLens />
                  </button>
                  <button type="button" aria-label="Pan" className="flex h-5 w-5 items-center justify-center"><PanIcon /></button>
                </div>
                {drawers.map((name) => (
                  <button type="button" key={name} className="block h-[23px] w-full border-t border-[#a0a0a0] text-left">
                    <span className="block h-[22px] border-t border-white bg-linear-to-b from-[#f2f2f2] to-[#c6c6c6] pl-0.5 leading-[22px] whitespace-nowrap">{name}</span>
                  </button>
                ))}
              </div>
            </div>
          </Panel>

          <Panel
            className="h-[165px] shrink-0"
            tabs={
              <>
                <Tab active icon={<CatalogIcon />} label="Catalog" />
                <Tab icon={<SearchIcon />} label="Search" />
                <Tab icon={<TableIcon />} label="Table" />
                <Tab icon={<WebIcon />} label="Web" />
                <Tab icon={<MonitorIcon />} label="Console" />
              </>
            }
            tools={
              <>
                <button type="button" aria-label="Import" className="mt-1 mr-2"><ImportIcon /></button>
                <button type="button" aria-label="Remove" className="mt-1 mr-[15px]"><DeleteIcon /></button>
                <WindowButtons menu />
              </>
            }
          >
            <div className="mt-0.5 flex flex-1 bg-white px-0.5 pb-0.5">
              <ul className="flex-1 border border-[#828790] pt-px">
                <TreeRow open icon={<DbIcon />} label="PostGIS localhost/testdb" className="pl-[6px]" />
                <TreeRow open icon={<SchemaFolder />} label="public" className="pl-[25px]" />
                <TreeRow selected icon={<FeatureShape />} label="china_country" className="pl-[44px]" />
              </ul>
            </div>
          </Panel>
        </div>
        <div className="w-px shrink-0 bg-[#a0a0a0]" />
      </main>

      <svg width="20" height="4" viewBox="0 0 20 4" className="absolute right-2 bottom-0" aria-hidden="true">
        <path d="M0 4Q10 1 19 0L20 4Z" fill="#f26b3a" />
      </svg>
    </div>
  );
}
